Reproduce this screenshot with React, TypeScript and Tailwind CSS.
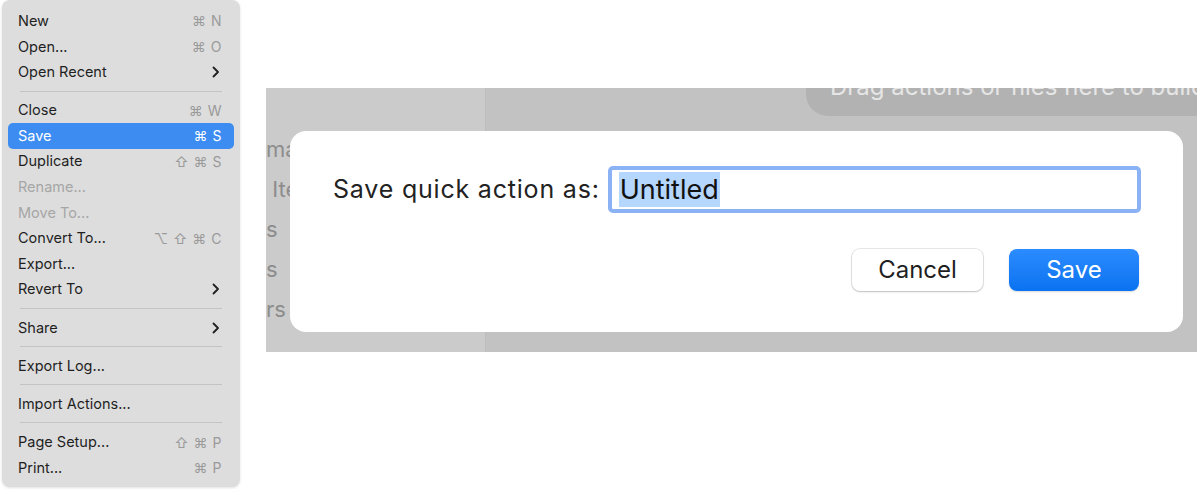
import React from 'react';

type Item =
  | { kind: 'sep' }
  | {
      kind: 'item';
      label: string;
      shortcut?: string;
      submenu?: boolean;
      disabled?: boolean;
      active?: boolean;
    };

const menu: Item[] = [
  { kind: 'item', label: 'New', shortcut: '⌘ N' },
  { kind: 'item', label: 'Open...', shortcut: '⌘ O' },
  { kind: 'item', label: 'Open Recent', submenu: true },
  { kind: 'sep' },
  { kind: 'item', label: 'Close', shortcut: '⌘ W' },
  { kind: 'item', label: 'Save', shortcut: '⌘ S', active: true },
  { kind: 'item', label: 'Duplicate', shortcut: '⇧ ⌘ S' },
  { kind: 'item', label: 'Rename...', disabled: true },
  { kind: 'item', label: 'Move To...', disabled: true },
  { kind: 'item', label: 'Convert To...', shortcut: '⌥ ⇧ ⌘ C' },
  { kind: 'item', label: 'Export...' },
  { kind: 'item', label: 'Revert To', submenu: true },
  { kind: 'sep' },
  { kind: 'item', label: 'Share', submenu: true },
  { kind: 'sep' },
  { kind: 'item', label: 'Export Log...' },
  { kind: 'sep' },
  { kind: 'item', label: 'Import Actions...' },
  { kind: 'sep' },
  { kind: 'item', label: 'Page Setup...', shortcut: '⇧ ⌘ P' },
  { kind: 'item', label: 'Print...', shortcut: '⌘ P' },
];

function Chevron() {
  return (
    <svg width="8" height="12" viewBox="0 0 8 12" fill="none">
      <path d="M1.5 1.5 6 6l-4.5 4.5" stroke="#1f1f1f" strokeWidth="1.8" strokeLinecap="round" strokeLinejoin="round" />
    </svg>
  );
}

function FileMenu() {
  return (
    <div className="ml-[2px] w-[238px] h-[487px] rounded-[8px] bg-[#dddddd] pt-[8px] shadow-[0_1px_3px_rgba(0,0,0,0.12)]">
      {menu.map((it, i) =>
        it.kind === 'sep' ? (
          <div key={i} className="h-[12.6px] flex items-center px-[18px]">
            <div className="h-px w-full bg-[#c4c4c4]" />
          </div>
        ) : (
          <div
            key={i}
            className={
              'h-[25.6px] mx-[6px] pl-[10px] pr-[12px] rounded-[5px] flex items-center justify-between text-[14.5px] ' +
              (it.active ? 'bg-[#3d8cf2] text-white' : it.disabled ? 'text-[#a6a6a6]' : 'text-[#1f1f1f]')
            }
          >
            <span>{it.label}</span>
            {it.shortcut && (
              <span className={'text-[14px] tracking-[0.5px] ' + (it.active ? 'text-white' : 'text-[#9a9a9a]')}>
                {it.shortcut}
              </span>
            )}
            {it.submenu && (
              <span className="pr-[2px]">
                <Chevron />
              </span>
            )}
          </div>
        )
      )}
    </div>
  );
}

function SaveDialog() {
  return (
    <div className="absolute left-[24px] top-[43px] w-[893px] h-[201px] rounded-[16px] bg-white pl-[43px] pr-[42px] pt-[35px]">
      <div className="flex items-center h-[47px]">
        <span className="text-[25px] tracking-[0.8px] text-[#222222] mr-[8px] whitespace-nowrap">Save quick action as:</span>
        <div className="flex-1 h-[47px] rounded-[5px] border-[4px] border-[#8ab2f4] bg-white flex items-center pl-[7px]">
          <span className="text-[27px] leading-[35px] text-[#111111] bg-[#b5d6fd] px-[1px]">Untitled</span>
        </div>
      </div>
      <div className="flex justify-end gap-[26px] mt-[36px] pr-[2px]">
        <button className="w-[131px] h-[42px] rounded-[8px] bg-white text-[24px] text-[#1f1f1f] shadow-[0_0_0_1px_rgba(0,0,0,0.09),0_1px_2px_rgba(0,0,0,0.18)]">
          Cancel
        </button>
        <button className="w-[130px] h-[42px] rounded-[8px] bg-gradient-to-b from-[#2b8cff] to-[#0972f0] text-[24px] text-white shadow-[0_1px_2px_rgba(0,0,0,0.15)]">
          Save
        </button>
      </div>
    </div>
  );
}

export default function App() {
  const fragments = ['ma', ' Ite', 's', 's', 'rs'];
  return (
    <div className="w-[1200px] h-[489px] bg-white flex items-start overflow-hidden" style={{ fontFamily: 'Inter, "Liberation Sans", "DejaVu Sans", sans-serif' }}>
      <FileMenu />
      <div className="relative ml-[26px] mt-[88px] w-[931px] h-[264px] flex">
        <div className="w-[219px] bg-[#cbcbcb] pt-[46px] overflow-hidden">
          {fragments.map((f, i) => (
            <div key={i} className="h-[40px] text-[22px] leading-[30px] text-[#8d8d8d] whitespace-pre">
              {f}
            </div>
          ))}
        </div>
        <div className="flex-1 bg-[#c2c2c2] border-l border-[#bdbdbd] flex flex-col items-end">
          <div className="w-[391px] h-[28px] rounded-bl-[22px] bg-[#b2b2b2] overflow-hidden pl-[24px]">
            <div className="text-[24px] leading-none text-[#e6e6e6] whitespace-nowrap -mt-[13px]">
              Drag actions or files here to build
            </div>
          </div>
        </div>
        <SaveDialog />
      </div>
    </div>
  );
}
